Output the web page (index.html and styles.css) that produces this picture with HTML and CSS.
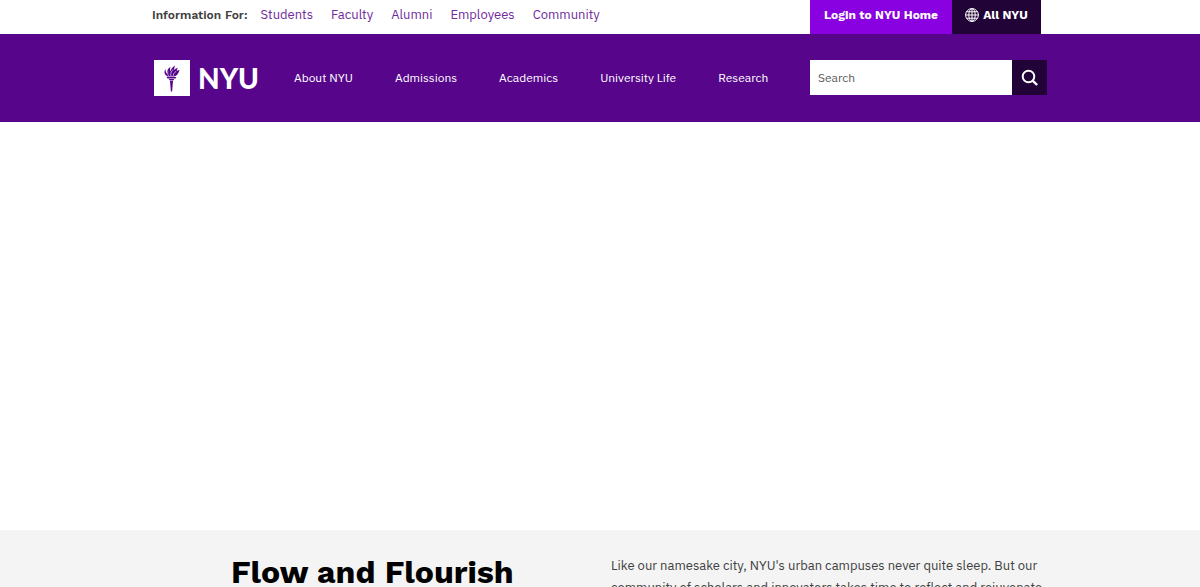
FILE: index.html
```html
<!DOCTYPE html>
<html lang="en">
	<head>
		<meta charset="UTF-8">
		<title>NYU</title>
		<link rel="stylesheet" href="styles.css">
	</head>
	<body>
		<div class="container top">
			<nav class="info" aria-label="Information for">
				<strong>Information For:</strong>
				<ul>
					<li><a href="#">Students</a></li>
					<li><a href="#">Faculty</a></li>
					<li><a href="#">Alumni</a></li>
					<li><a href="#">Employees</a></li>
					<li><a href="#">Community</a></li>
				</ul>
			</nav>
			<div class="global">
				<a class="login" href="#">Login to NYU Home</a>
				<a class="all" href="#">
					<svg width="14" height="14" viewBox="0 0 14 14" fill="none" stroke="#fff" aria-hidden="true">
						<circle cx="7" cy="7" r="6.4"/>
						<ellipse cx="7" cy="7" rx="3.2" ry="6.4"/>
						<path d="M7 .6v12.8M.6 7h12.8M1.5 3.8h11M1.5 10.2h11"/>
					</svg>
					All NYU
				</a>
			</div>
		</div>
		<header class="header">
			<div class="container bar">
				<a class="logo" href="#">
					<svg width="36" height="36" viewBox="0 0 36 36" aria-hidden="true">
						<path fill="#fff" d="M0 0h36v36H0z"/>
						<g fill="#57068c">
							<path d="M12.500 17h10l-1 1.600h-8z"/>
							<path d="M14.800 19h5.400l-1 1.600h-3.400z"/>
							<path d="M16 21h3l-.9 10.500h-1.200z"/>
							<path d="M13.500 16.400C10.400 14.800 9.600 11.800 11.600 9c-.3 2.200.4 3.700 1.700 4.900-.7-3 .5-5.200 3.200-7.200-.7 2-.5 3.200 0 4.700.4-2.300 1.800-4.200 4.700-5.900-1 2-.8 3.200-1.200 4.800 1-1.300 2.300-2.100 4-2.500-.9 1.200-.9 2-1.100 3.100.7-.6 1.500-.9 2.600-1-1.100 3.700-2.600 5.900-5.500 6.500z"/>
						</g>
						<path d="M15 16.500c-1.400-1.700-1.600-3.400-1.100-5.300M17 16.500c-.8-2-.2-4.500 1.900-7M19 16.500c0-2 1.300-3.900 3.300-5.400" fill="none" stroke="#fff" stroke-width=".6"/>
					</svg>
					<span>NYU</span>
				</a>
				<nav aria-label="Main">
					<ul class="menu">
						<li><a href="#">About NYU</a></li>
						<li><a href="#">Admissions</a></li>
						<li><a href="#">Academics</a></li>
						<li><a href="#">University Life</a></li>
						<li><a href="#">Research</a></li>
					</ul>
				</nav>
				<form class="search">
					<input type="text" name="q" placeholder="Search" aria-label="Search">
					<button type="submit" aria-label="Submit search">
						<svg width="18" height="18" viewBox="0 0 18 18" fill="none" stroke="#fff" stroke-width="2" aria-hidden="true">
							<circle cx="7.500" cy="7.500" r="5.800"/>
							<path d="M11.800 11.800l4.400 4.200" stroke-width="2.400"/>
						</svg>
					</button>
				</form>
			</div>
		</header>
		<main>
			<div class="hero"></div>
			<section class="feature">
				<div class="container feature-row">
					<h1>Flow and Flourish</h1>
					<p>Like our namesake city, NYU's urban campuses never quite sleep. But our community of scholars and innovators takes time to reflect and rejuvenate</p>
				</div>
			</section>
		</main>
	</body>
</html>
```
FILE: styles.css
```css
*{
	margin: 0;
	padding: 0;
	box-sizing: border-box;
}
body{
	background: #fff;
	color: #404040;
	font-family: "IBM Plex Sans", Roboto, sans-serif;
	font-size: 13px;
	line-height: 16px;
}
ul{
	display: flex;
	list-style: none;
}
a{
	text-decoration: none;
	white-space: nowrap;
}
.container{
	max-width: 896px;
	margin: 0 auto;
}
/* top bar */
.top{
	display: flex;
	justify-content: space-between;
	padding-right: 7px;
}
.info{
	display: flex;
	gap: 13px;
	padding: 7px 0 11px;
}
.info strong,
.global a,
.feature h1{
	font-family: "Work Sans", Inter, sans-serif;
}
.info strong{
	font-size: 12px;
	font-weight: 600;
}
.info ul{
	gap: 18px;
}
.info a{
	color: #702b9d;
}
.global{
	display: flex;
}
.global a{
	display: flex;
	align-items: center;
	justify-content: center;
	gap: 4px;
	padding-bottom: 4px;
	color: #fff;
	font-size: 12px;
	font-weight: 700;
}
.login{
	width: 142px;
	background: #8900e1;
}
.all{
	width: 89px;
	background: #220337;
}
/* header */
.header{
	background: #57068c;
}
.bar{
	display: flex;
	align-items: flex-start;
	padding: 26px 1px 26px 2px;
	line-height: 36px;
}
.logo{
	display: flex;
	align-items: center;
	gap: 8px;
	width: 140px;
	color: #fff;
	font-family: Lato, sans-serif;
	font-size: 28px;
	font-weight: 900;
}
.menu{
	gap: 42px;
	font-size: 12px;
}
.menu a{
	color: #fff;
}
.search{
	display: flex;
	width: 237px;
	height: 35px;
	margin-left: auto;
}
.search input{
	flex: 1;
	min-width: 0;
	padding: 0 8px;
	border: 0;
	font: inherit;
	font-size: 12px;
}
.search input::placeholder{
	color: #5a5a5a;
}
.search button{
	display: flex;
	align-items: center;
	justify-content: center;
	width: 35px;
	border: 0;
	background: #220337;
	cursor: pointer;
}
/* content */
.hero{
	height: 408px;
}
.feature{
	padding: 22px 0 40px;
	background: #f4f4f4;
}
.feature-row{
	display: grid;
	grid-template-columns: 380px 448px;
	padding-left: 79px;
}
.feature h1{
	color: #000;
	font-size: 32px;
	font-weight: 700;
	line-height: 40px;
}
.feature p{
	padding-top: 3px;
	line-height: 22px;
}
```
